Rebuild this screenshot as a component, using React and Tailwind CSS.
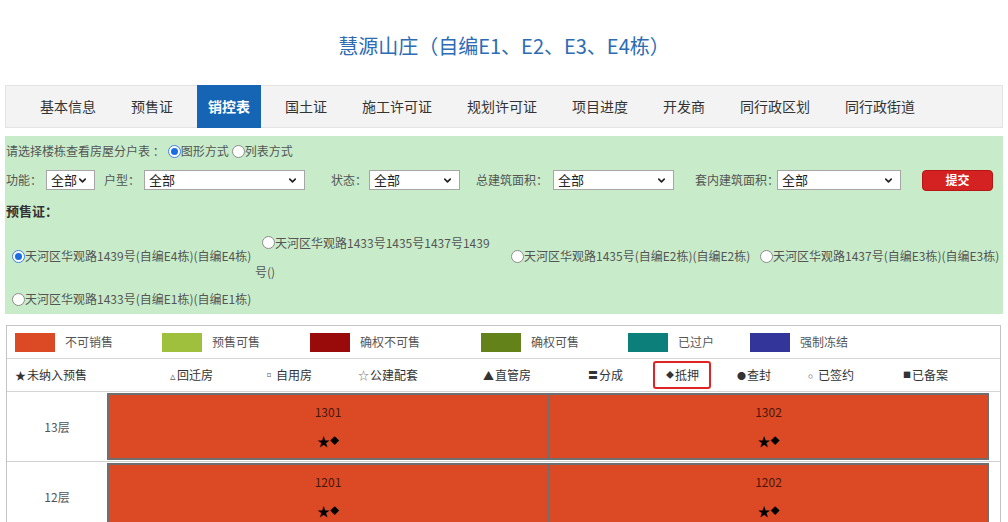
import React from 'react';
import { ChevronDown } from 'lucide-react';

const tabs = ['基本信息', '预售证', '销控表', '国土证', '施工许可证', '规划许可证', '项目进度', '开发商', '同行政区划', '同行政街道'];

const swatches = [
  { label: '不可销售', color: 'bg-[#dc4a25]', w: 'w-[147px]' },
  { label: '预售可售', color: 'bg-[#9ec03c]', w: 'w-[148px]' },
  { label: '确权不可售', color: 'bg-[#990a0a]', w: 'w-[171px]' },
  { label: '确权可售', color: 'bg-[#64821a]', w: 'w-[147px]' },
  { label: '已过户', color: 'bg-[#0d7f7a]', w: 'w-[122px]' },
  { label: '强制冻结', color: 'bg-[#33359a]', w: 'w-[150px]' },
];

const marks = [
  { sym: '★', text: '未纳入预售', w: 'w-[155px]', cls: 'text-[11px]' },
  { sym: '▵', text: '回迁房', w: 'w-[93px]', cls: 'text-[11px] text-[#666]' },
  { sym: '▫', text: '自用房', w: 'w-[95px]', cls: 'text-[12px] text-[#555]' },
  { sym: '☆', text: '公建配套', w: 'w-[125px]', cls: 'text-[11px] text-[#777]' },
  { sym: '▲', text: '直管房', w: 'w-[105px]', cls: 'text-[11px]' },
  { sym: '〓', text: '分成', w: 'w-[78px]', cls: 'text-[10px] font-bold' },
  { sym: '◆', text: '抵押', w: 'w-[71px]', cls: 'text-[8px]', boxed: true },
  { sym: '●', text: '查封', w: 'w-[67px]', cls: 'text-[9px]' },
  { sym: '◦', text: '已签约', w: 'w-[99px]', cls: 'text-[13px] text-[#666]' },
  { sym: '■', text: '已备案', w: 'w-[80px]', cls: 'text-[8px]' },
];

const floors = [
  { name: '13层', rooms: ['1301', '1302'] },
  { name: '12层', rooms: ['1201', '1202'] },
];

const Radio = ({ checked }) => (
  <span
    className={`inline-flex w-[13px] h-[13px] rounded-full border items-center justify-center bg-white shrink-0 ${
      checked ? 'border-[#3b82e0]' : 'border-[#8c8c8c]'
    }`}
  >
    {checked && <span className="w-[7px] h-[7px] rounded-full bg-[#1a6fe0]" />}
  </span>
);

const FakeSelect = ({ width }) => (
  <div className={`${width} h-[20px] border border-[#a6a6a6] bg-white flex items-center justify-between pl-[4px] pr-[6px] text-[13px] text-[#222]`}>
    <span>全部</span>
    <ChevronDown size={11} strokeWidth={3.5} className="text-[#222]" />
  </div>
);

const App = () => {
  return (
    <div className="w-[1008px] bg-white text-[12px] text-[#555]" style={{ fontFamily: '"Noto Sans CJK SC", "Noto Sans", sans-serif' }}>
      {/* 标题 */}
      <div className="h-[85px] flex items-center justify-center pt-[7px]">
        <h1 className="text-[20px] text-[#2d6cb3]">慧源山庄（自编E1、E2、E3、E4栋）</h1>
      </div>

      {/* 导航 */}
      <div className="mx-[5px] h-[43px] border border-[#e3e3e3] bg-[#f3f3f3] flex pl-[23px] gap-[13px]">
        {tabs.map((t) => (
          <div
            key={t}
            className={`-my-px px-[11px] flex items-center text-[14px] ${
              t === '销控表' ? 'bg-[#1565b4] text-white font-bold' : 'text-[#333]'
            }`}
          >
            {t}
          </div>
        ))}
      </div>

      {/* 筛选区 */}
      <div className="mx-[5px] mt-[8px] bg-[#c8ecca] px-[1px]">
        <div className="h-[30px] flex items-center">
          <span>请选择楼栋查看房屋分户表 ：</span>
          <span className="ml-[3px] flex items-center">
            <Radio checked />
            <span>图形方式</span>
          </span>
          <span className="ml-[3px] flex items-center">
            <Radio />
            <span>列表方式</span>
          </span>
        </div>

        <div className="h-[28px] flex items-center">
          <span className="w-[40px]">功能：</span>
          <FakeSelect width="w-[49px]" />
          <span className="ml-[9px] w-[40px]">户型：</span>
          <FakeSelect width="w-[161px]" />
          <span className="ml-[26px] w-[38px]">状态：</span>
          <FakeSelect width="w-[91px]" />
          <span className="ml-[16px] w-[77px]">总建筑面积：</span>
          <FakeSelect width="w-[121px]" />
          <span className="ml-[21px] w-[82px] whitespace-nowrap">套内建筑面积：</span>
          <FakeSelect width="w-[124px]" />
          <button className="ml-[21px] w-[71px] h-[21px] bg-[#d42121] border border-[#b51515] rounded-sm text-white font-bold text-[12px]">
            提交
          </button>
        </div>

        <div className="h-[34px] flex items-center font-bold text-[13px] text-[#333]">预售证：</div>

        <div className="h-[56px] flex items-center">
          <label className="ml-[6px] w-[243px] flex items-center whitespace-nowrap">
            <Radio checked />
            <span>天河区华观路1439号(自编E4栋)(自编E4栋)</span>
          </label>
          <div className="w-[256px] leading-[29px]">
            <span className="ml-[7px] inline-flex items-center align-middle">
              <Radio />
            </span>
            <span className="align-middle">天河区华观路1433号1435号1437号1439</span>
            <br />
            <span>号()</span>
          </div>
          <label className="w-[249px] flex items-center whitespace-nowrap">
            <Radio />
            <span>天河区华观路1435号(自编E2栋)(自编E2栋)</span>
          </label>
          <label className="flex items-center whitespace-nowrap">
            <Radio />
            <span>天河区华观路1437号(自编E3栋)(自编E3栋)</span>
          </label>
        </div>

        <div className="h-[30px] flex items-center">
          <label className="ml-[6px] flex items-center whitespace-nowrap">
            <Radio />
            <span>天河区华观路1433号(自编E1栋)(自编E1栋)</span>
          </label>
        </div>
      </div>

      {/* 销控表 */}
      <div className="ml-[6px] mr-[7px] mt-[11px] border border-[#c4c4c4]">
        <div className="h-[33px] flex items-center border-b border-[#d4d4d4] pl-[8px]">
          {swatches.map((s) => (
            <div key={s.label} className={`${s.w} flex items-center`}>
              <span className={`w-[40px] h-[19px] ${s.color}`} />
              <span className="ml-[10px]">{s.label}</span>
            </div>
          ))}
        </div>

        <div className="h-[33px] flex items-center border-b border-[#d4d4d4] pl-[8px]">
          {marks.map((m) => (
            <div key={m.text} className={`${m.w} flex items-center`}>
              <span className="relative flex items-center text-[#333]">
                {m.boxed && (
                  <span className="absolute -left-[13px] -right-[12px] -top-[5px] -bottom-[5px] border-2 border-[#e02424] rounded-[3px]" />
                )}
                <span className={`${m.cls} leading-none mr-[1px]`}>{m.sym}</span>
                <span>{m.text}</span>
              </span>
            </div>
          ))}
        </div>

        {floors.map((f) => (
          <div key={f.name} className="h-[70px] flex border-b border-[#d0d0d0]">
            <div className="w-[100px] flex items-center justify-center text-[#555]">{f.name}</div>
            {f.rooms.map((r, i) => (
              <div
                key={r}
                className={`my-[1px] h-[67px] bg-[#db4a25] border-2 border-[#6f6f6f] flex flex-col items-center ${
                  i === 0 ? 'w-[442px]' : 'w-[440px] border-l-[1px]'
                }`}
              >
                <span className="mt-[8px] text-[12px] text-[#4a160a]">{r}</span>
                <span className="mt-[13px] text-[13px] text-black leading-none">
                  ★<span className="text-[9px] align-[2px]">◆</span>
                </span>
              </div>
            ))}
          </div>
        ))}
      </div>
    </div>
  );
};

export default App;
